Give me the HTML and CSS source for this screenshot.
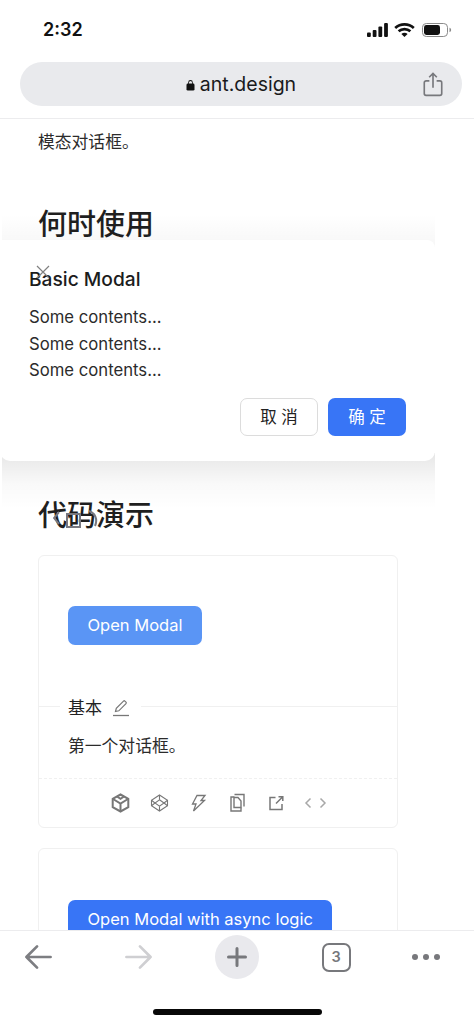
FILE: index.html
```html
<!DOCTYPE html>
<html lang="zh-CN">

<head>
    <meta charset="UTF-8">
    <meta name="viewport" content="width=device-width, initial-scale=1.0">
    <title>ant.design</title>
    <link rel="stylesheet" href="styles.css">
</head>

<body>
    <div class="phone">
        <header class="browser-top">
            <div class="status-bar">
                <span class="clock">2:32</span>
                <div class="status-icons">
                    <svg width="21" height="14" viewBox="0 0 21 14" fill="#111">
                        <rect x="0" y="9.5" width="3.800" height="4.500" rx="1" />
                        <rect x="5.700" y="7" width="3.800" height="7" rx="1" />
                        <rect x="11.400" y="3.500" width="3.800" height="10.500" rx="1" />
                        <rect x="17.100" y="0" width="3.800" height="14" rx="1" />
                    </svg>
                    <svg class="wifi" width="21" height="14" viewBox="0 0 21 14" fill="none" stroke="#111" stroke-width="2.700">
                        <path d="M1.200 5C6.500 .2 14.500 .2 19.800 5" />
                        <path d="M4.600 8.300C8 5.300 13 5.300 16.400 8.300" />
                        <path d="M10.500 14 7.400 10.900C9.200 9.500 11.800 9.500 13.600 10.900Z" fill="#111" stroke="none" />
                    </svg>
                    <svg width="30" height="14" viewBox="0 0 30 14" fill="none">
                        <rect x=".5" y=".5" width="25" height="13" rx="3.800" stroke="#8a8a8a" />
                        <rect x="2" y="2" width="16" height="10" rx="2.400" fill="#111" />
                        <path d="M27.500 4.800c1.200.4 1.600 1.200 1.600 2.200s-.4 1.800-1.600 2.200z" fill="#8a8a8a" />
                    </svg>
                </div>
            </div>
            <div class="address-bar">
                <span class="address">
                    <svg class="lock" width="9" height="12" viewBox="0 0 9 12" fill="#111">
                        <path d="M2.200 5V3.400a2.300 2.300 0 0 1 4.600 0V5H6V3.400a1.500 1.500 0 0 0-3 0V5z" />
                        <rect x=".5" y="4.600" width="8" height="7" rx="1.400" />
                    </svg>
                    ant.design
                </span>
                <svg class="share" width="20" height="25" viewBox="0 0 22 27" fill="none" stroke="#77787c" stroke-width="1.800">
                    <path d="M7 9.500H3.400A2 2 0 0 0 1.400 11.500v12a2 2 0 0 0 2 2h15.200a2 2 0 0 0 2-2v-12a2 2 0 0 0-2-2H15" />
                    <path d="M11 17V1.500M6.800 5.500 11 1.300l4.200 4.200" />
                </svg>
            </div>
        </header>

        <main class="doc">
            <p class="intro">模态对话框。</p>
            <h2 class="doc-title when">何时使用</h2>
            <h2 class="doc-title demo">代码演示
                <span class="title-icons">
                    <svg width="50" height="22" viewBox="0 0 50 22" fill="none" stroke="#77777f" stroke-width="2">
                        <path d="M6 5 1 11l5 6" />
                        <rect x="14" y="7" width="13" height="13" />
                        <path d="M36 4c6 2 9 8 6 15" />
                    </svg>
                </span>
            </h2>

            <section class="demo-card first">
                <div class="demo-preview">
                    <a class="btn btn-light">Open Modal</a>
                </div>
                <div class="demo-meta">
                    <div class="meta-title">
                        <span>基本</span>
                        <svg width="18" height="18" viewBox="0 0 18 18" fill="none" stroke="#777" stroke-width="1.200">
                            <path d="M3.500 12.500 4.300 9.300 11.500 2.100a1 1 0 0 1 1.400 0l1.100 1.100a1 1 0 0 1 0 1.400L6.800 11.800z" />
                            <path d="M1 16.500h16" stroke-width="1.300" />
                        </svg>
                    </div>
                    <p class="meta-desc">第一个对话框。</p>
                </div>
                <div class="demo-actions">
                    <!-- codesandbox -->
                    <svg height="20" viewBox="0 0 18 20" fill="none" stroke="#777" stroke-width="2">
                        <path d="M9 1.500 16.800 5.800v8.400L9 18.500l-7.800-4.300V5.800z" />
                        <path d="M1.500 6 9 10.500 16.500 6M9 10.500V18" />
                        <path d="M5.500 3.500 9 5.800l3.500-2.300" />
                    </svg>
                    <!-- codepen -->
                    <svg height="18" viewBox="0 0 18 18" fill="none" stroke="#777" stroke-width="1.100">
                        <path d="M9 1 17 6.300v5.400L9 17l-8-5.300V6.300z" />
                        <path d="M9 5.800 13.500 9 9 12.200 4.500 9z" />
                        <path d="M1 6.300 4.500 9 1 11.700M17 6.300 13.500 9l3.500 2.700M9 1v4.800M9 12.200V17" />
                    </svg>
                    <!-- stackblitz -->
                    <svg height="18" viewBox="0 0 16 18" fill="none" stroke="#777" stroke-width="1.300">
                        <path d="M6.500 1.500h8L10.500 6.500h3.500L3 17l2.500-7H2z" />
                    </svg>
                    <!-- copy -->
                    <svg height="19" viewBox="0 0 16 19" fill="none" stroke="#777" stroke-width="1.400">
                        <path d="M5 4H1.500v14h10v-3.500" />
                        <path d="M4.500 4.500h4l3 3.500v6.500h-7z" />
                        <path d="M5 1.500h9.500v12" />
                    </svg>
                    <!-- external -->
                    <svg height="16" viewBox="0 0 16 16" fill="none" stroke="#777" stroke-width="1.500">
                        <path d="M7 2.500H1.500v12h12V9" />
                        <path d="M7.500 8.500 14 2M10 1.700h4.300V6" />
                    </svg>
                    <!-- code -->
                    <svg height="12" viewBox="0 0 22 12" fill="none" stroke="#a8a8a8" stroke-width="1.500">
                        <path d="M6 1.500 1.500 6 6 10.500M16 1.500 20.500 6 16 10.500" />
                    </svg>
                </div>
            </section>

            <section class="demo-card second">
                <div class="demo-preview">
                    <a class="btn btn-primary">Open Modal with async logic</a>
                </div>
            </section>
        </main>

        <div class="modal">
            <svg class="modal-close" width="14" height="14" viewBox="0 0 14 14" stroke="#808080" stroke-width="1.200">
                <path d="M1 1l12 12M13 1 1 13" />
            </svg>
            <h3 class="modal-title">Basic Modal</h3>
            <div class="modal-body">
                <p>Some contents...</p>
                <p>Some contents...</p>
                <p>Some contents...</p>
            </div>
            <div class="modal-footer">
                <a class="btn btn-cancel">取 消</a>
                <a class="btn btn-primary">确 定</a>
            </div>
        </div>

        <footer class="browser-bottom">
            <div class="toolbar">
                <svg width="29" height="26" viewBox="0 0 30 26" fill="none" stroke="#7d7e82" stroke-width="2.800" stroke-linecap="round" stroke-linejoin="round">
                    <path d="M27.500 13H2.500M13.500 2 2.500 13l11 11" />
                </svg>
                <svg width="29" height="26" viewBox="0 0 30 26" fill="none" stroke="#cfcfd2" stroke-width="2.800" stroke-linecap="round" stroke-linejoin="round">
                    <path d="M2.500 13H27.500M16.500 2l11 11-11 11" />
                </svg>
                <span class="new-tab">
                    <svg width="20" height="20" viewBox="0 0 20 20" stroke="#77787c" stroke-width="3" stroke-linecap="round">
                        <path d="M10 1.500v17M1.500 10h17" />
                    </svg>
                </span>
                <span class="tab-count">3</span>
                <span class="more"><i></i><i></i><i></i></span>
            </div>
            <div class="home-bar"></div>
        </footer>
    </div>
</body>

</html>
```

FILE: styles.css
```css
* {
    margin: 0;
    padding: 0;
    box-sizing: border-box;
}

body {
    background-color: #fff;
    font-family: Inter, "Noto Sans CJK SC", sans-serif;
    color: #1d1d1f;
}

.phone {
    position: relative;
    isolation: isolate;
    width: 474px;
    height: 1025px;
    overflow: hidden;
    background-color: #fff;
}

/* browser chrome */
.browser-top {
    height: 119px;
    padding: 0 12px 0 20px;
    border-bottom: 1px solid #ececee;
}

.status-bar {
    display: flex;
    justify-content: space-between;
    align-items: center;
    height: 62px;
    padding: 0 10px 3px 23px;
}

.clock {
    font-size: 18px;
    font-weight: 600;
    color: #111;
}

.status-icons {
    display: flex;
    align-items: center;
    gap: 6px;
}

.wifi {
    margin-right: 1px;
}

.address-bar {
    display: flex;
    align-items: center;
    justify-content: center;
    position: relative;
    width: 442px;
    height: 44px;
    border-radius: 22px;
    background-color: #e9eaed;
}

.address {
    display: flex;
    align-items: center;
    gap: 5px;
    font-size: 19.500px;
    color: #1a1a1c;
}

.lock {
    margin-top: 2px;
}

.share {
    position: absolute;
    right: 19px;
    top: 10px;
}

/* page content */
.doc {
    padding: 0 77px 0 38px;
}

.intro {
    padding-top: 11px;
    font-size: 16.800px;
    line-height: 24px;
    color: #2b2b2b;
}

.doc-title {
    position: relative;
    font-size: 29px;
    font-weight: 500;
    line-height: 40px;
    color: #1f1f1f;
}

.when {
    margin-top: 51px;
}

.demo {
    margin-top: 251px;
}

.title-icons {
    position: absolute;
    left: 15px;
    top: 11px;
    display: flex;
}

.demo-card {
    width: 360px;
    border: 1px solid #f0f0f0;
    border-radius: 6px;
    background-color: #fff;
}

.first {
    margin-top: 18.500px;
}

.first .demo-preview {
    padding-top: 50.500px;
}

.second {
    min-height: 140px;
    margin-top: 19.500px;
}

.demo-preview {
    padding: 51px 29px 0;
}

.btn {
    display: inline-block;
    height: 39px;
    padding: 0 19.500px;
    border-radius: 7px;
    font-size: 16.500px;
    line-height: 39px;
    text-align: center;
    color: #fff;
}

.btn-light {
    background-color: #5a95f5;
}

.btn-primary {
    background-color: #3875f6;
}

.btn-cancel {
    border: 1px solid #dcdcdc;
    background-color: #fff;
    line-height: 36.500px;
    color: #222;
}

.demo-meta {
    position: relative;
    margin-top: 60.500px;
    padding: 0 29px 20px;
    border-top: 1px solid #f0f0f0;
}

.meta-title {
    display: flex;
    align-items: center;
    gap: 10px;
    width: fit-content;
    margin: -11px 0 0 -8px;
    padding: 0 11px 0 8px;
    font-size: 17px;
    line-height: 24px;
    color: #222;
    background-color: #fff;
}

.meta-desc {
    margin-top: 14px;
    font-size: 16.800px;
    line-height: 24px;
    color: #2b2b2b;
}

.demo-actions {
    display: flex;
    align-items: center;
    justify-content: center;
    height: 49.500px;
    border-top: 1px dashed #f0f0f0;
}

.demo-actions svg {
    width: 39px;
}

/* modal over the page */
.modal {
    position: absolute;
    left: 0;
    top: 240px;
    width: 435px;
    height: 221px;
    padding: 26px 29px 0;
    border-radius: 0 8px 10px 10px;
    background-color: #fff;
}

/* the shadow is cut at the modal's own width, so no box-shadow here */
.modal::before,
.modal::after {
    content: "";
    position: absolute;
    left: 2px;
    right: 0;
    z-index: -1;
}

.modal::before {
    top: -26px;
    height: 34px;
    background: linear-gradient(to top, rgba(0, 0, 0, .035), rgba(0, 0, 0, 0));
}

.modal::after {
    bottom: -48px;
    height: 56px;
    background: linear-gradient(to bottom, rgba(0, 0, 0, .1), rgba(0, 0, 0, .08) 14%, rgba(0, 0, 0, .025) 55%, rgba(0, 0, 0, 0));
}

.modal-close {
    position: absolute;
    left: 36px;
    top: 25px;
}

.modal-title {
    font-size: 19.200px;
    font-weight: 500;
    line-height: 27px;
    color: #1c1c1c;
}

.modal-body {
    margin-top: 11px;
    font-size: 16.700px;
    line-height: 26.500px;
    color: #2b2b2b;
}

.modal-footer {
    display: flex;
    justify-content: flex-end;
    gap: 10px;
    margin-top: 14px;
}

.modal-footer .btn {
    width: 78px;
    height: 38.500px;
    padding: 0;
}

/* bottom toolbar */
.browser-bottom {
    position: absolute;
    left: 0;
    right: 0;
    bottom: 0;
    height: 95px;
    border-top: 1px solid #ececee;
    background-color: #fff;
}

.toolbar {
    display: grid;
    grid-template-columns: 76px 124px 74px 124px 56px;
    align-items: center;
    justify-items: center;
    height: 52px;
}

.new-tab {
    display: flex;
    align-items: center;
    justify-content: center;
    width: 44px;
    height: 44px;
    border-radius: 50%;
    background-color: #e9e9ed;
}

.tab-count {
    width: 29px;
    height: 29px;
    border: 2.500px solid #77787c;
    border-radius: 7px;
    font-size: 14.500px;
    font-weight: 600;
    line-height: 24px;
    text-align: center;
    color: #77787c;
}

.more {
    display: flex;
    gap: 5px;
}

.more i {
    width: 6px;
    height: 6px;
    border-radius: 50%;
    background-color: #77787c;
}

.home-bar {
    width: 169px;
    height: 6px;
    margin: 26px auto 0;
    border-radius: 3px;
    background-color: #080808;
}
```
